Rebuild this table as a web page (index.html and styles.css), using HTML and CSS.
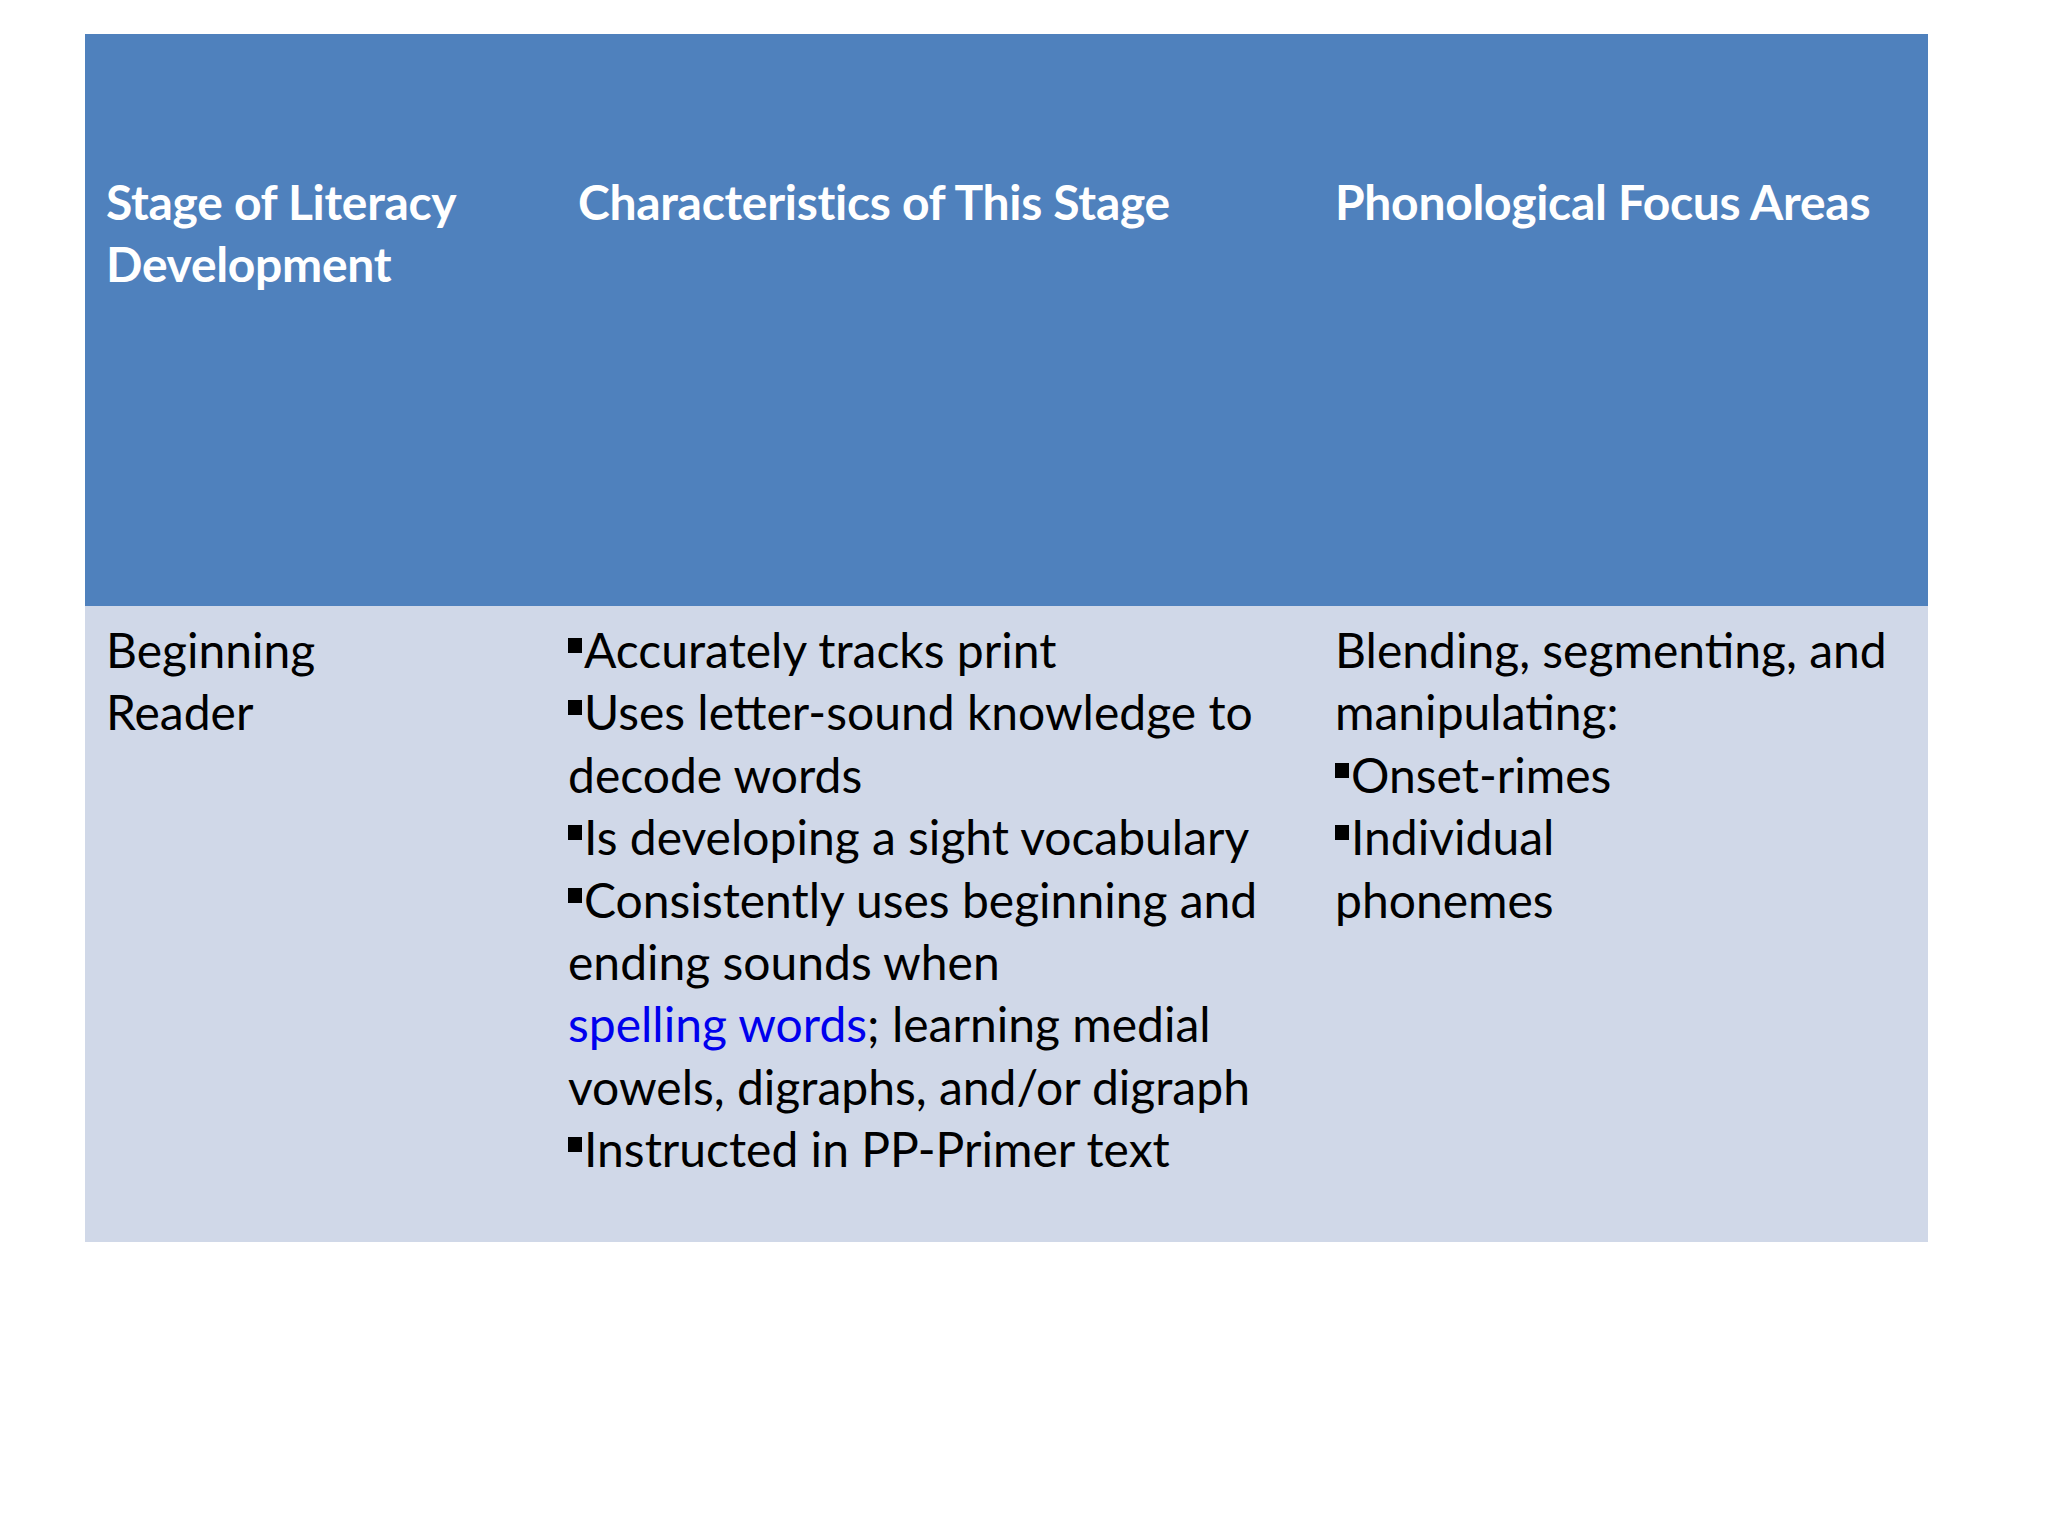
FILE: index.html
```html
<!DOCTYPE html>
<html lang="en">
<head>
<meta charset="utf-8">
<title>Stages of Literacy Development</title>
<link rel="stylesheet" href="styles.css">
</head>
<body>
<main class="slide">
  <div class="table">
    <div class="row head">
      <div class="cell c1">Stage of Literacy<br>Development</div>
      <div class="cell c2 lead">Characteristics of This Stage</div>
      <div class="cell c3">Phonological Focus Areas</div>
    </div>
    <div class="row body">
      <div class="cell c1">Beginning<br>Reader</div>
      <div class="cell c2">
        <p class="bullet">Accurately tracks print</p>
        <p class="bullet">Uses letter-sound knowledge to<br>decode words</p>
        <p class="bullet">Is developing a sight vocabulary</p>
        <p class="bullet">Consistently uses beginning and<br>ending sounds when<br><span class="link">spelling words</span>; learning medial<br>vowels, digraphs, and/or digraph</p>
        <p class="bullet">Instructed in PP-Primer text</p>
      </div>
      <div class="cell c3">
        <p>Blending, segmenting, and<br>manipulating:</p>
        <p class="bullet">Onset-rimes</p>
        <p class="bullet">Individual<br>phonemes</p>
      </div>
    </div>
  </div>
</main>
</body>
</html>
```
FILE: styles.css
```css
html, body {
  margin: 0;
  padding: 0;
  background: #ffffff;
}
.slide {
  width: 2048px;
  height: 1536px;
  padding: 34px 0 0 85px;
  box-sizing: border-box;
  font-family: Lato, "Open Sans", "Liberation Sans", sans-serif;
}
.table {
  width: 1843px;
}
.row {
  display: grid;
  grid-template-columns: 462px 767px 614px;
}
.head {
  background: #4f81bd;
  color: #ffffff;
  font-weight: 700;
  height: 572px;
  letter-spacing: -0.3px;
}
.body {
  background: #d0d8e8;
  color: #000000;
  height: 636px;
}
.cell {
  padding: 0 21px;
  font-size: 48px;
  line-height: 62.4px;
  white-space: nowrap;
}
.head .cell {
  padding-top: 137px;
}
.body .cell {
  padding-top: 13px;
}
.head .lead {
  padding-left: 31px;
}
p {
  margin: 0;
}
.bullet::before {
  content: "";
  display: inline-block;
  width: 14px;
  height: 15px;
  background: #000000;
  vertical-align: 15px;
  margin-right: 2px;
}
.link {
  color: #0000ee;
}
```
